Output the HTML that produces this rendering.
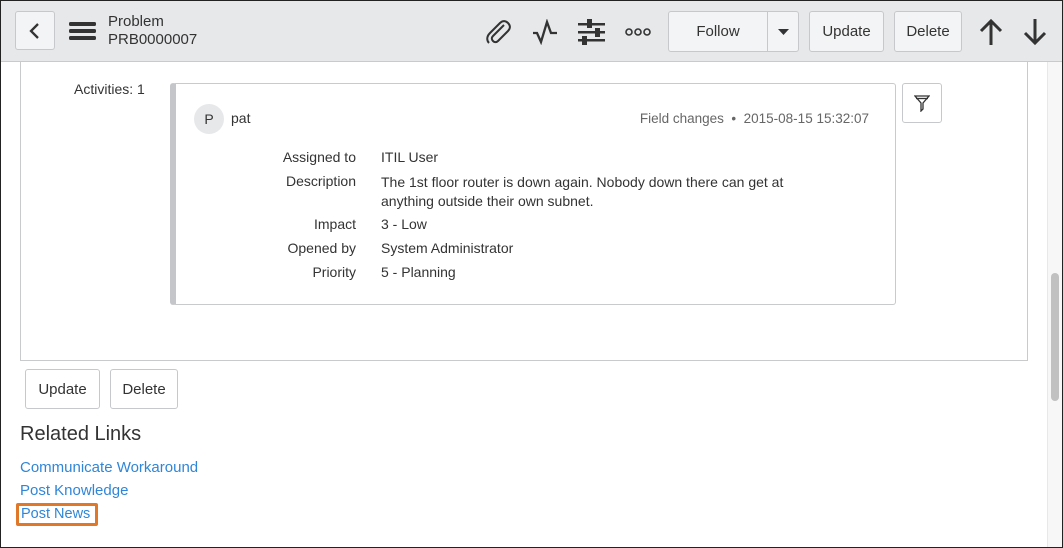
<!DOCTYPE html>
<html><head><style>
*{box-sizing:border-box;margin:0;padding:0}
body{width:1063px;height:548px;overflow:hidden;font-family:"Liberation Sans",sans-serif;color:#333;background:#fff;position:relative}
.frame{position:absolute;left:0;top:0;width:1063px;height:548px;border:1px solid #222;pointer-events:none;z-index:9}
.hdr{position:absolute;left:0;top:0;width:1063px;height:62px;background:#e6e8ea;border-bottom:1px solid #c8cacc}
.btn{position:absolute;border:1px solid #c6c8cb;border-radius:3px;background:#f3f4f5;font-size:15px;color:#333;display:flex;align-items:center;justify-content:center}
.wbtn{position:absolute;border:1px solid #c6c8cb;border-radius:3px;background:#fff;font-size:15px;color:#333;display:flex;align-items:center;justify-content:center}
.t{position:absolute;white-space:nowrap}
.lbl{position:absolute;font-size:14px;color:#333;text-align:right;width:150px;left:206px}
.val{position:absolute;font-size:14px;color:#333;left:381px}
a{color:#2f86d8;text-decoration:none}
</style></head><body>
<div class="hdr">
 <div class="btn" style="left:15px;top:11px;width:40px;height:39px"><svg width="14" height="20" viewBox="0 0 14 20"><path d="M10 3L3 10l7 7" fill="none" stroke="#333" stroke-width="2.3"/></svg></div>
 <svg style="position:absolute;left:69px;top:21px" width="27" height="20"><rect y="1" width="27" height="4" rx="1.5" fill="#333"/><rect y="8" width="27" height="4" rx="1.5" fill="#333"/><rect y="15" width="27" height="4" rx="1.5" fill="#333"/></svg>
 <div class="t" style="left:108px;top:13px;font-size:15px">Problem</div>
 <div class="t" style="left:108px;top:31px;font-size:15px">PRB0000007</div>
 <svg style="position:absolute;left:485px;top:18px" width="26" height="28" viewBox="0 0 26 28"><path d="M19 7L8 18c-2 2-1 4 0 5s3 2 5 0L23 13c3-3 2-6 0-8s-5-3-8 0L5 15c-4 4-3 8-1 10" fill="none" stroke="#333" stroke-width="2"/></svg>
 <svg style="position:absolute;left:531px;top:19px" width="28" height="26" viewBox="0 0 28 26"><path d="M2 14h4l4 9 6-20 4 11h6" fill="none" stroke="#333" stroke-width="2.3"/></svg>
 <svg style="position:absolute;left:577px;top:19px" width="29" height="26"><rect x="1" y="4" width="27" height="2.5" fill="#333"/><rect x="10" y="0" width="5" height="9" fill="#333"/><rect x="1" y="12" width="27" height="2.5" fill="#333"/><rect x="18" y="9" width="5" height="9" fill="#333"/><rect x="1" y="20" width="27" height="2.5" fill="#333"/><rect x="5" y="17" width="5" height="9" fill="#333"/></svg>
 <svg style="position:absolute;left:625px;top:28px" width="27" height="8"><circle cx="4" cy="4" r="3" fill="none" stroke="#333" stroke-width="1.6"/><circle cx="13" cy="4" r="3" fill="none" stroke="#333" stroke-width="1.6"/><circle cx="22" cy="4" r="3" fill="none" stroke="#333" stroke-width="1.6"/></svg>
 <div class="btn" style="left:668px;top:11px;width:131px;height:41px;justify-content:flex-start"><span style="width:98px;text-align:center">Follow</span><span style="width:1px;height:39px;background:#c6c8cb"></span><svg style="margin-left:10px" width="11" height="6"><path d="M0 0h11L5.5 6z" fill="#333"/></svg></div>
 <div class="btn" style="left:809px;top:11px;width:75px;height:41px">Update</div>
 <div class="btn" style="left:894px;top:11px;width:68px;height:41px">Delete</div>
 <svg style="position:absolute;left:978px;top:18px" width="26" height="28"><path d="M13 27V3M3 13L13 3l10 10" fill="none" stroke="#333" stroke-width="3"/></svg>
 <svg style="position:absolute;left:1022px;top:18px" width="26" height="28"><path d="M13 1v24M3 15l10 10 10-10" fill="none" stroke="#333" stroke-width="3"/></svg>
</div>
<div style="position:absolute;left:20px;top:62px;width:1008px;height:299px;border:1px solid #c8cacc;border-top:none"></div>
<div class="t" style="left:74px;top:81px;font-size:14px">Activities: 1</div>
<div style="position:absolute;left:170px;top:83px;width:726px;height:222px;border:1px solid #c8cacc;border-left:6px solid #c4c6c9;border-radius:3px"></div>
<div style="position:absolute;left:194px;top:104px;width:30px;height:30px;border-radius:50%;background:#e6e8ea;font-size:14px;display:flex;align-items:center;justify-content:center">P</div>
<div class="t" style="left:231px;top:110px;font-size:14px">pat</div>
<div class="t" style="right:194px;top:111px;font-size:13.5px;color:#666">Field changes &nbsp;•&nbsp; 2015-08-15 15:32:07</div>
<div class="lbl" style="top:149px">Assigned to</div><div class="val" style="top:149px">ITIL User</div>
<div class="lbl" style="top:173px">Description</div><div class="val" style="top:173px;line-height:19px">The 1st floor router is down again. Nobody down there can get at<br>anything outside their own subnet.</div>
<div class="lbl" style="top:216px">Impact</div><div class="val" style="top:216px">3 - Low</div>
<div class="lbl" style="top:240px">Opened by</div><div class="val" style="top:240px">System Administrator</div>
<div class="lbl" style="top:264px">Priority</div><div class="val" style="top:264px">5 - Planning</div>
<div class="wbtn" style="left:902px;top:83px;width:40px;height:40px"><svg width="16" height="18" viewBox="0 0 16 18"><path d="M1 2h14L9 9v6l-2 2V9z" fill="none" stroke="#333" stroke-width="1.3"/><path d="M2 4.5h12" stroke="#333" stroke-width="1.3"/></svg></div>
<div class="wbtn" style="left:25px;top:369px;width:75px;height:40px">Update</div>
<div class="wbtn" style="left:110px;top:369px;width:68px;height:40px">Delete</div>
<div class="t" style="left:20px;top:423px;font-size:20px;color:#333">Related Links</div>
<div class="t" style="left:20px;top:459px;font-size:15px"><a>Communicate Workaround</a></div>
<div class="t" style="left:20px;top:482px;font-size:15px"><a>Post Knowledge</a></div>
<div class="t" style="left:16px;top:503px;width:82px;height:23px;font-size:14.5px;border:3px solid #e0782a;border-radius:2px;padding:0 0 0 2px;line-height:16px"><a>Post News</a></div>
<div style="position:absolute;left:1047px;top:62px;width:16px;height:486px;background:#f7f7f7;border-left:1px solid #e8e8e8"></div>
<div style="position:absolute;left:1051px;top:273px;width:8px;height:128px;background:#c1c1c1;border-radius:4px"></div>
<div class="frame"></div>
</body></html>
